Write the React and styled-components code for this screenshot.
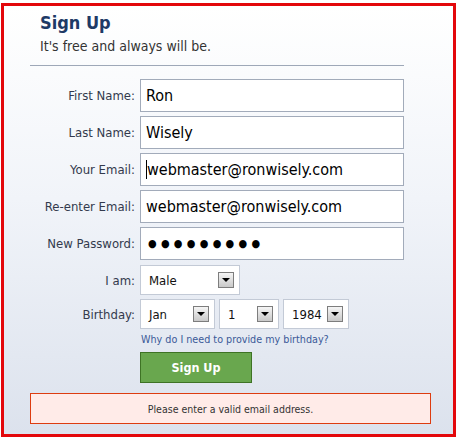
import React from 'react'
import styled, { createGlobalStyle } from 'styled-components'

const GlobalStyle = createGlobalStyle`
  body {
    margin: 0;
    background: #fff;
    font-family: "DejaVu Sans Condensed", "DejaVu Sans", sans-serif;
  }
`

const Page = styled.div`
  padding: 3px 0 0 1px;
`

const Box = styled.div`
  width: 455px;
  height: 434px;
  box-sizing: border-box;
  border: 3px solid #e3070b;
  background: linear-gradient(#ffffff 0%, #f1f4f9 45%, #dce2ed 100%);
  padding: 6px 0 0 26px;
`

const Header = styled.div`
  padding-left: 10px;
`

const Title = styled.h1`
  margin: 0;
  font-size: 18px;
  line-height: 22px;
  font-weight: bold;
  color: #1e3a66;
`

const Subtitle = styled.div`
  margin-top: 3px;
  font-size: 14px;
  line-height: 19px;
  color: #333;
`

const Divider = styled.div`
  width: 374px;
  height: 1px;
  background: #9ea8b8;
  margin: 9px 0 13px;
`

const Form = styled.div`
  display: flex;
  flex-direction: column;
  gap: 4px;
`

const Row = styled.div`
  display: flex;
  align-items: center;
  gap: 5px;
  margin-top: ${p => p.$top || 0}px;
`

const Label = styled.label`
  width: 105px;
  text-align: right;
  font-size: 13px;
  color: #333a4d;
`

const Field = styled.div`
  width: 264px;
  height: 33px;
  box-sizing: border-box;
  border: 1px solid #a2abba;
  background: #fff;
  padding-left: ${p => (p.$dots ? '7px' : '5px')};
  display: flex;
  align-items: center;
  font-size: ${p => (p.$dots ? '11px' : '16px')};
  color: #000;
  letter-spacing: ${p => (p.$dots ? '4.3px' : '0')};
`

const Caret = styled.span`
  display: inline-block;
  width: 1px;
  height: 19px;
  background: #000;
`

const Selects = styled.div`
  display: flex;
  gap: 4px;
`

const Select = styled.div`
  width: ${p => p.$w}px;
  height: 30px;
  box-sizing: border-box;
  border: 1px solid #c3cad6;
  background: #fff;
  display: flex;
  align-items: center;
  justify-content: space-between;
  padding: 0 5px 0 8px;
  font-size: 13px;
  color: #111;
`

const Arrow = styled.span`
  width: 16px;
  height: 16px;
  box-sizing: border-box;
  border: 1px solid #7d7d7d;
  background: linear-gradient(#f5f5f5, #c9c9c9);
  display: flex;
  align-items: center;
  justify-content: center;

  &::after {
    content: '';
    border-left: 4px solid transparent;
    border-right: 4px solid transparent;
    border-top: 4px solid #000;
  }
`

const Indented = styled.div`
  padding-left: 110px;
`

const Link = styled.a`
  display: block;
  padding-left: 1px;
  font-size: 10.7px;
  line-height: 14px;
  color: #3b5998;
  text-decoration: none;
`

const Button = styled.button`
  width: 112px;
  height: 31px;
  margin-top: 1px;
  border: 1px solid #3e7325;
  background: #69a74e;
  color: #fff;
  font-family: inherit;
  font-size: 12.5px;
  font-weight: bold;
  cursor: pointer;
`

const ErrorBox = styled.div`
  width: 401px;
  height: 31px;
  box-sizing: border-box;
  margin-top: 6px;
  border: 1px solid #dd3c10;
  background: #ffebe8;
  display: flex;
  align-items: center;
  justify-content: center;
  font-size: 10.5px;
  color: #333;
`

function Dropdown({ w, children }) {
  return (
    <Select $w={w}>
      {children}
      <Arrow />
    </Select>
  )
}

export default function App() {
  return (
    <>
      <GlobalStyle />
      <Page>
        <Box>
          <Header>
            <Title>Sign Up</Title>
            <Subtitle>It's free and always will be.</Subtitle>
          </Header>
          <Divider />
          <Form>
            <Row>
              <Label>First Name:</Label>
              <Field>Ron</Field>
            </Row>
            <Row>
              <Label>Last Name:</Label>
              <Field>Wisely</Field>
            </Row>
            <Row>
              <Label>Your Email:</Label>
              <Field><Caret />webmaster@ronwisely.com</Field>
            </Row>
            <Row>
              <Label>Re-enter Email:</Label>
              <Field>webmaster@ronwisely.com</Field>
            </Row>
            <Row>
              <Label>New Password:</Label>
              <Field $dots>●●●●●●●●●</Field>
            </Row>
            <Row $top={1}>
              <Label>I am:</Label>
              <Dropdown w={100}>Male</Dropdown>
            </Row>
            <Row>
              <Label>Birthday:</Label>
              <Selects>
                <Dropdown w={75}>Jan</Dropdown>
                <Dropdown w={60}>1</Dropdown>
                <Dropdown w={66}>1984</Dropdown>
              </Selects>
            </Row>
            <Indented>
              <Link href="#">Why do I need to provide my birthday?</Link>
            </Indented>
            <Indented>
              <Button>Sign Up</Button>
            </Indented>
            <ErrorBox>Please enter a valid email address.</ErrorBox>
          </Form>
        </Box>
      </Page>
    </>
  )
}
